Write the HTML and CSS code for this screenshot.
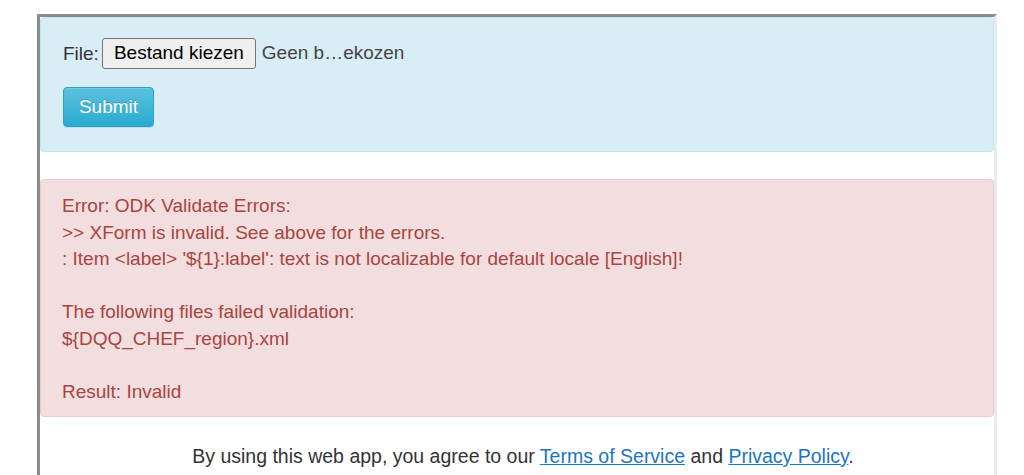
FILE: index.html
```html
<!DOCTYPE html>
<html lang="en">
<head>
    <meta charset="UTF-8">
    <title>Validate XLSForm</title>
    <link rel="stylesheet" href="styles.css">
</head>
<body>
    <div class="frame">
        <div class="alert alert-info">
            <form class="upload-form">
                <div class="file-row">
                    <label>File:</label>
                    <button type="button" class="file-button">Bestand kiezen</button>
                    <span class="file-name">Geen b…ekozen</span>
                </div>
                <button type="button" class="btn-info">Submit</button>
            </form>
        </div>

        <div class="alert alert-danger">
            <p>Error: ODK Validate Errors:<br>
            &gt;&gt; XForm is invalid. See above for the errors.<br>
            : Item &lt;label&gt; '${1}:label': text is not localizable for default locale [English]!</p>
            <p>The following files failed validation:<br>
            ${DQQ_CHEF_region}.xml</p>
            <p>Result: Invalid</p>
        </div>

        <footer>
            By using this web app, you agree to our <a href="#">Terms of Service</a> and <a href="#">Privacy Policy</a>.
        </footer>
    </div>
</body>
</html>
```

FILE: styles.css
```css
body {
    margin: 0;
    font-family: "Liberation Sans", Arial, sans-serif;
    font-size: 19px;
    line-height: 26.5px;
    color: #333;
    background-color: white;
    overflow: hidden;
}
.frame {
    margin: 14px 0 0 37px;
    width: 954px;
    height: 600px;
    border-left: 3px solid #8c8c8c;
    border-top: 3px solid #8c8c8c;
    border-right: 3px solid #ebebeb;
}
.alert {
    border: 1px solid transparent;
    border-radius: 4px;
}
.alert-info {
    background-color: #d9edf7;
    border-color: #bce8f1;
    padding: 19px 22px 24px 22px;
}
.alert-danger {
    background-color: #f2dede;
    border-color: #ebccd1;
    color: #a94442;
    margin-top: 27px;
    padding: 13px 21px 11px 21px;
}
.alert-danger p {
    margin: 0 0 26.5px 0;
}
.alert-danger p:last-child {
    margin-bottom: 0;
}
.file-row {
    display: flex;
    align-items: center;
    height: 32px;
}
.file-row label {
    margin-right: 3px;
    padding-top: 3px;
}
.file-button {
    font-family: "Liberation Sans", Arial, sans-serif;
    font-size: 19px;
    color: black;
    background-color: #efefef;
    border: 1px solid #767676;
    border-radius: 3px;
    height: 31px;
    padding: 0 11px;
    margin-right: 6px;
}
.file-name {
    color: #444;
}
.btn-info {
    margin-top: 18px;
    font-family: "Liberation Sans", Arial, sans-serif;
    font-size: 19px;
    color: white;
    height: 40px;
    width: 91px;
    border: 1px solid #28a4c9;
    border-radius: 4px;
    background-image: linear-gradient(to bottom, #5bc0de 0, #2aabd2 100%);
    text-shadow: 0 -1px 0 rgba(0,0,0,0.2);
    box-shadow: inset 0 1px 0 rgba(255,255,255,0.15), 0 1px 1px rgba(0,0,0,0.075);
}
footer {
    text-align: center;
    margin-top: 26px;
    padding-left: 12px;
    font-size: 19.5px;
}
footer a {
    color: #1a75c6;
}
```
